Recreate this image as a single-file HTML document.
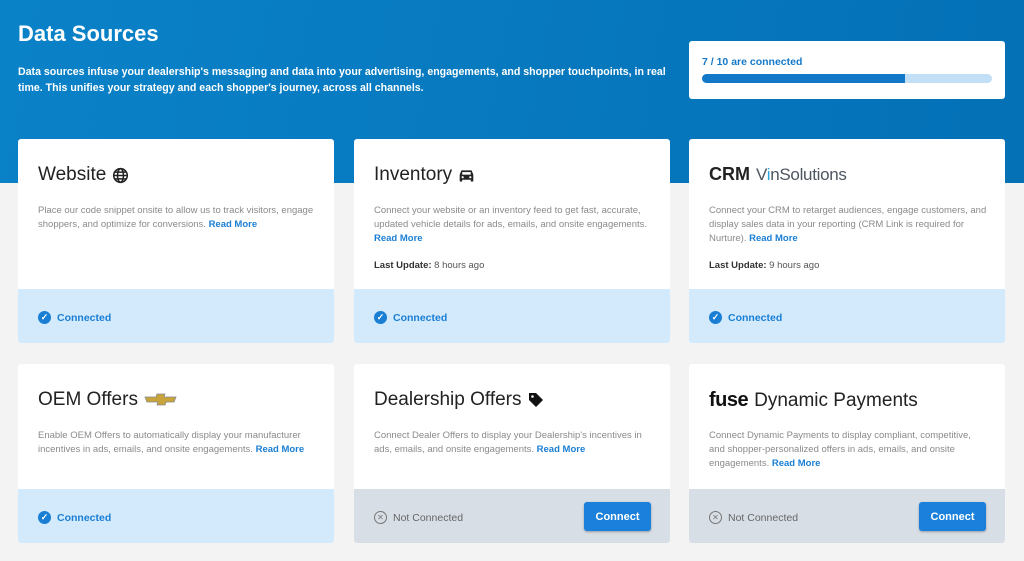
<!DOCTYPE html>
<html><head><meta charset="utf-8"><style>
*{box-sizing:border-box;margin:0;padding:0}
body{width:1024px;height:561px;overflow:hidden;background:#f3f3f3;font-family:"Liberation Sans",sans-serif;position:relative}
.hdr{position:absolute;left:0;top:0;width:1024px;height:183px;background:linear-gradient(100deg,#0a82c8,#0470b6)}
h1{position:absolute;left:18px;top:21px;color:#fff;font-size:22px;font-weight:bold}
.desc{position:absolute;left:18px;top:64px;width:660px;color:#fff;font-size:10.6px;font-weight:bold;line-height:16px}
.prog{position:absolute;left:689px;top:41px;width:316px;height:58px;background:#fff;border-radius:3px;padding:15px 13px}
.prog div{color:#1478c8;font-size:10.5px;font-weight:bold}
.bar{margin-top:6px;height:9px;border-radius:5px;background:#c3dff5;position:relative}
.bar:after{content:"";position:absolute;left:0;top:0;height:9px;width:70%;background:#1478c8;border-radius:5px 0 0 5px}
.card{position:absolute;width:316px;background:#fff;border-radius:3px;overflow:hidden}
.t{position:absolute;left:20px;top:25px;font-size:19px;color:#222;display:flex;align-items:center;gap:6px}
.b{position:absolute;left:20px;top:65px;width:278px;font-size:9.5px;color:#8a8a8a;line-height:14px}
.b a{color:#1a7fd4;font-weight:bold}
.lu{position:absolute;left:20px;top:121px;font-size:9.5px;color:#555}
.lu b{color:#333}
.f{position:absolute;left:0;bottom:0;width:316px;height:54px;background:#d3eafd;display:flex;align-items:center;padding-left:20px;padding-top:3px;font-size:10.5px;font-weight:bold;color:#1a7fd4}
.f.n{background:#d7dee5;color:#666;font-weight:normal}
.chk{width:13px;height:13px;border-radius:50%;background:#1a7fd4;color:#fff;font-size:9px;display:inline-flex;align-items:center;justify-content:center;margin-right:6px}
.x{width:13px;height:13px;border-radius:50%;border:1.3px solid #777;color:#777;font-size:8px;display:inline-flex;align-items:center;justify-content:center;margin-right:6px}
.btn{position:absolute;right:19px;top:13px;width:67px;height:29px;background:#1a80db;color:#fff;border-radius:3px;font-size:11px;font-weight:bold;display:flex;align-items:center;justify-content:center;box-shadow:0 1px 2px rgba(0,0,0,.3)}
</style></head><body>
<div class="hdr"></div>
<h1>Data Sources</h1>
<div class="desc">Data sources infuse your dealership's messaging and data into your advertising, engagements, and shopper touchpoints, in real time. This unifies your strategy and each shopper's journey, across all channels.</div>
<div class="prog"><div>7 / 10 are connected</div><div class="bar"></div></div>

<div class="card" style="left:18px;top:139px;height:204px">
<div class="t">Website <svg width="17" height="17" viewBox="0 0 20 20" fill="none" stroke="#222" stroke-width="1.8"><circle cx="10" cy="10" r="8"/><ellipse cx="10" cy="10" rx="3.5" ry="8"/><path d="M2 10h16M3.5 6h13M3.5 14h13"/></svg></div>
<div class="b">Place our code snippet onsite to allow us to track visitors, engage shoppers, and optimize for conversions. <a>Read More</a></div>
<div class="f"><span class="chk">✓</span>Connected</div></div>

<div class="card" style="left:354px;top:139px;height:204px">
<div class="t">Inventory <svg width="17" height="15" viewBox="0 0 20 16"><path d="M4 2h12l2 5v8h-3v-2H5v2H2V7z" fill="#222"/><rect x="5" y="4" width="10" height="3" fill="#fff"/><circle cx="5.5" cy="10" r="1.3" fill="#fff"/><circle cx="14.5" cy="10" r="1.3" fill="#fff"/></svg></div>
<div class="b">Connect your website or an inventory feed to get fast, accurate, updated vehicle details for ads, emails, and onsite engagements. <a>Read More</a></div>
<div class="lu"><b>Last Update:</b> 8 hours ago</div>
<div class="f"><span class="chk">✓</span>Connected</div></div>

<div class="card" style="left:689px;top:139px;height:204px">
<div class="t"><b style="font-weight:bold;font-size:18px">CRM</b> <span style="color:#4c5560;font-size:17px;letter-spacing:-.3px">V<span style="color:#2aa6df">i</span>nSolutions</span></div>
<div class="b">Connect your CRM to retarget audiences, engage customers, and display sales data in your reporting (CRM Link is required for Nurture). <a>Read More</a></div>
<div class="lu"><b>Last Update:</b> 9 hours ago</div>
<div class="f"><span class="chk">✓</span>Connected</div></div>

<div class="card" style="left:18px;top:364px;height:179px">
<div class="t">OEM Offers <svg width="34" height="14" viewBox="0 0 34 14"><path d="M1 4h11l1-3h8l-1 3h12l-2 5H22l-1 3h-8l1-3H3z" fill="#c9a43b" stroke="#888" stroke-width=".8"/></svg></div>
<div class="b">Enable OEM Offers to automatically display your manufacturer incentives in ads, emails, and onsite engagements. <a>Read More</a></div>
<div class="f"><span class="chk">✓</span>Connected</div></div>

<div class="card" style="left:354px;top:364px;height:179px">
<div class="t">Dealership Offers <svg width="16" height="16" viewBox="0 0 16 16"><path d="M1 1h7l7 7-7 7-7-7z" fill="#111"/><circle cx="4.5" cy="4.5" r="1.3" fill="#fff"/></svg></div>
<div class="b">Connect Dealer Offers to display your Dealership's incentives in ads, emails, and onsite engagements. <a>Read More</a></div>
<div class="f n"><span class="x">✕</span>Not Connected<div class="btn">Connect</div></div></div>

<div class="card" style="left:689px;top:364px;height:179px">
<div class="t"><b style="font-size:20px;color:#111;letter-spacing:-.5px">fuse</b> Dynamic Payments</div>
<div class="b">Connect Dynamic Payments to display compliant, competitive, and shopper-personalized offers in ads, emails, and onsite engagements. <a>Read More</a></div>
<div class="f n"><span class="x">✕</span>Not Connected<div class="btn">Connect</div></div></div>
</body></html>
